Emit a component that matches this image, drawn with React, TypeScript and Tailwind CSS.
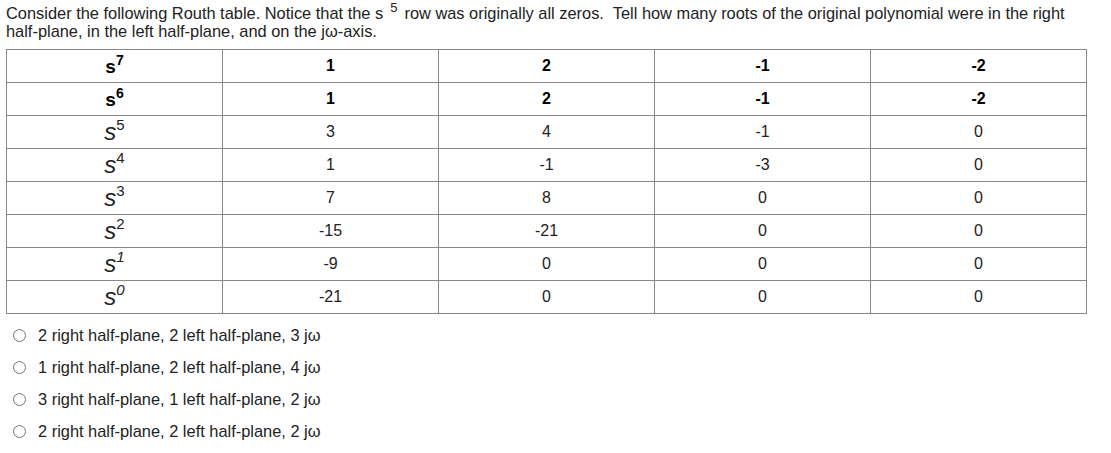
import React from "react"

type Row = { sup: string; bold?: boolean; italicSup?: boolean; cells: string[] }

const rows: Row[] = [
  { sup: "7", bold: true, cells: ["1", "2", "-1", "-2"] },
  { sup: "6", bold: true, cells: ["1", "2", "-1", "-2"] },
  { sup: "5", cells: ["3", "4", "-1", "0"] },
  { sup: "4", cells: ["1", "-1", "-3", "0"] },
  { sup: "3", cells: ["7", "8", "0", "0"] },
  { sup: "2", cells: ["-15", "-21", "0", "0"] },
  { sup: "1", italicSup: true, cells: ["-9", "0", "0", "0"] },
  { sup: "0", italicSup: true, cells: ["-21", "0", "0", "0"] },
]

const options = [
  "2 right half-plane, 2 left half-plane, 3 jω",
  "1 right half-plane, 2 left half-plane, 4 jω",
  "3 right half-plane, 1 left half-plane, 2 jω",
  "2 right half-plane, 2 left half-plane, 2 jω",
]

export default function App() {
  return (
    <div className="w-[1111px] h-[453px] bg-white text-[#222] font-['Liberation_Sans',Arial,sans-serif] overflow-hidden">
      {/* question */}
      <div className="w-[1092px] pl-[6px] pt-[4px] text-[16.4px] leading-[18px]">
        Consider the following Routh table. Notice that the s
        <span className="relative -top-[7px] mx-[7px] text-[13px] leading-none">5</span>row was originally all
        zeros.&nbsp; Tell how many roots of the original polynomial were in the right half-plane, in the left half-plane,
        and on the jω-axis.
      </div>

      {/* routh table */}
      <table className="ml-[6px] mt-[9px] w-[1081px] border-collapse table-fixed text-[16px]">
        <tbody>
          {rows.map((r, i) => (
            <tr key={i} className="h-[33px]">
              <td className="border border-[#888] text-center align-middle p-0 leading-none">
                {r.bold ? (
                  <span className="font-bold text-[19px] text-black">
                    s<sup className="text-[14px] -top-[8px]">{r.sup}</sup>
                  </span>
                ) : (
                  <span className="italic text-[24px] text-[#222]">
                    s
                    <sup className={`text-[15px] -top-[10px] ${r.italicSup ? "italic" : "not-italic"}`}>{r.sup}</sup>
                  </span>
                )}
              </td>
              {r.cells.map((c, j) => (
                <td
                  key={j}
                  className={`border border-[#888] text-center align-middle p-0 ${r.bold ? "font-bold text-black" : ""}`}
                >
                  {c}
                </td>
              ))}
            </tr>
          ))}
        </tbody>
      </table>

      {/* answers */}
      <div className="mt-[12px] flex flex-col gap-[14px] text-[16.4px] leading-[18px]">
        {options.map((o, i) => (
          <label key={i} className="flex items-center pl-[13px]">
            <span className="w-[13px] h-[13px] rounded-full border border-[#767676] bg-white" />
            <span className="ml-[12px]">{o}</span>
          </label>
        ))}
      </div>
    </div>
  )
}
